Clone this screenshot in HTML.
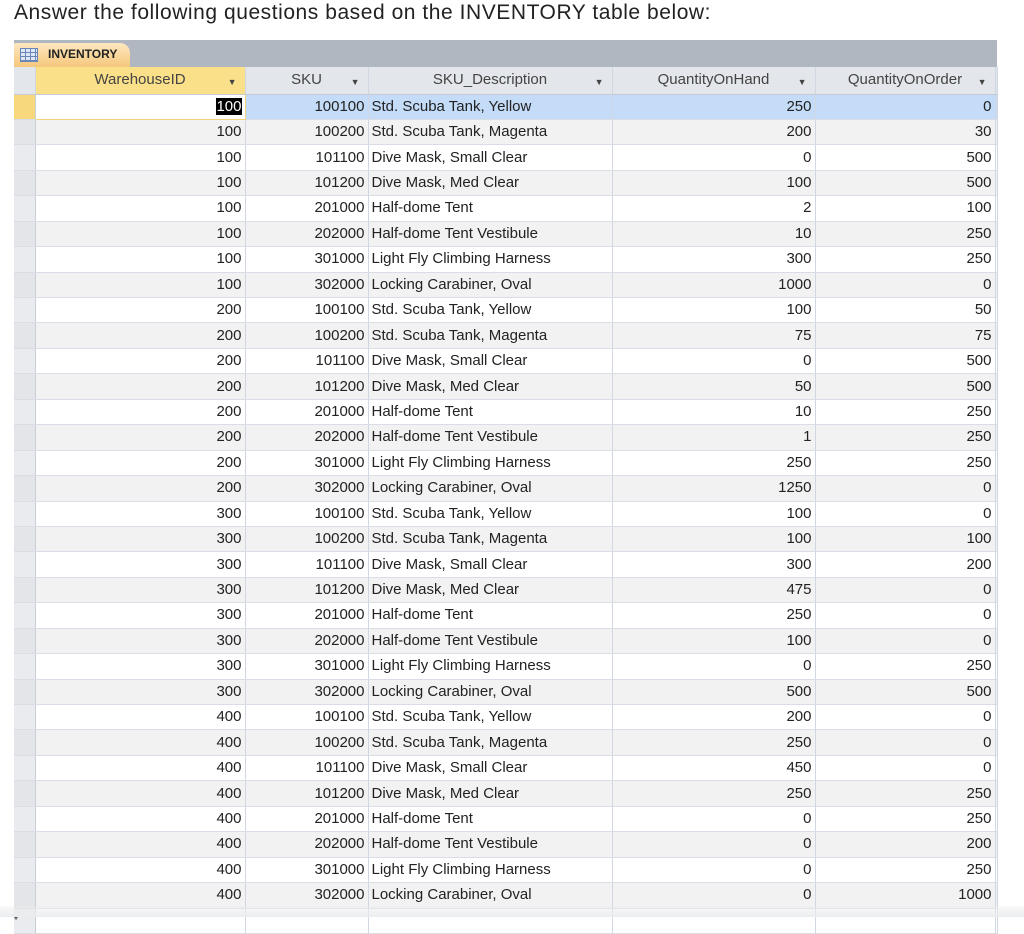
<!DOCTYPE html>
<html><head><meta charset="utf-8"><style>
body{margin:0;background:#fff;width:1024px;height:917px;overflow:hidden;position:relative;font-family:"Liberation Sans",sans-serif}
.title{position:absolute;left:14px;top:1px;font-size:21px;color:#222;letter-spacing:0.55px}
.bar{position:absolute;left:14px;top:40px;width:983px;height:27px;background:#b1b7c0}
.tab{position:absolute;left:14px;top:43px;width:116px;height:24px;background:linear-gradient(#fde8c0,#f6c77c);border-radius:2px 10px 0 0;font-size:12px;font-weight:bold;color:#222;line-height:22px}
.tab span{margin-left:34px}
.ico{position:absolute;left:6px;top:5px;width:16px;height:12px;border:1px solid #6a86b8;background:repeating-linear-gradient(90deg,transparent 0 4px,#6a86b8 4px 5px),repeating-linear-gradient(#dfe8f5 0 3px,#6a86b8 3px 4px)}
table{position:absolute;left:14px;top:67px;border-collapse:collapse;table-layout:fixed;font-size:15px;color:#222}
td,th{padding:0;height:24.45px;line-height:18px;border-right:1px solid #d0d7e2;border-bottom:1px solid #d9dee6;white-space:nowrap;overflow:hidden}
th{background:#e3e6ea;font-weight:normal;height:26.5px;color:#444;font-size:15px;position:relative;border-bottom:1px solid #c5cbd3}
th .a{position:absolute;right:8px;top:6px;font-size:9px;color:#444}
td.s{background:#e9ebee;border-right:1px solid #c8ced6}
td.r{text-align:right;padding-right:3px}
td.d{padding-left:3px}
tbody tr:nth-child(even) td{background:#f2f2f2}
tbody tr:nth-child(even) td.s{background:#e3e5e8}
tr.sel td{background:#c4dcf8}
tr.sel td.s{background:#f8d87c}
tr.sel td.w{background:#fff;border:1px solid #f2d27a}
.hl{background:#000;color:#fff}
.fade{position:absolute;left:0;top:906px;width:1024px;height:11px;background:linear-gradient(rgba(235,236,238,0.3),rgba(235,236,238,0.95))}
</style></head><body>
<div class="title">Answer the following questions based on the INVENTORY table below:</div>
<div class="bar"></div>
<div class="tab"><div class="ico"></div><span>INVENTORY</span></div>
<table>
<colgroup><col style="width:21px"><col style="width:210px"><col style="width:123px"><col style="width:244px"><col style="width:203px"><col style="width:180px"><col style="width:2px"></colgroup>
<thead><tr><th style="background:#e3e6ea"></th><th style="background:#fbe08a">WarehouseID<span class="a">▼</span></th><th>SKU<span class="a">▼</span></th><th>SKU_Description<span class="a">▼</span></th><th>QuantityOnHand<span class="a">▼</span></th><th>QuantityOnOrder<span class="a">▼</span></th><th></th></tr></thead>
<tbody>
<tr class="sel"><td class="s"></td><td class="r w"><span class="hl">100</span></td><td class="r">100100</td><td class="d">Std. Scuba Tank, Yellow</td><td class="r">250</td><td class="r">0</td><td></td></tr>
<tr><td class="s"></td><td class="r">100</td><td class="r">100200</td><td class="d">Std. Scuba Tank, Magenta</td><td class="r">200</td><td class="r">30</td><td></td></tr>
<tr><td class="s"></td><td class="r">100</td><td class="r">101100</td><td class="d">Dive Mask, Small Clear</td><td class="r">0</td><td class="r">500</td><td></td></tr>
<tr><td class="s"></td><td class="r">100</td><td class="r">101200</td><td class="d">Dive Mask, Med Clear</td><td class="r">100</td><td class="r">500</td><td></td></tr>
<tr><td class="s"></td><td class="r">100</td><td class="r">201000</td><td class="d">Half-dome Tent</td><td class="r">2</td><td class="r">100</td><td></td></tr>
<tr><td class="s"></td><td class="r">100</td><td class="r">202000</td><td class="d">Half-dome Tent Vestibule</td><td class="r">10</td><td class="r">250</td><td></td></tr>
<tr><td class="s"></td><td class="r">100</td><td class="r">301000</td><td class="d">Light Fly Climbing Harness</td><td class="r">300</td><td class="r">250</td><td></td></tr>
<tr><td class="s"></td><td class="r">100</td><td class="r">302000</td><td class="d">Locking Carabiner, Oval</td><td class="r">1000</td><td class="r">0</td><td></td></tr>
<tr><td class="s"></td><td class="r">200</td><td class="r">100100</td><td class="d">Std. Scuba Tank, Yellow</td><td class="r">100</td><td class="r">50</td><td></td></tr>
<tr><td class="s"></td><td class="r">200</td><td class="r">100200</td><td class="d">Std. Scuba Tank, Magenta</td><td class="r">75</td><td class="r">75</td><td></td></tr>
<tr><td class="s"></td><td class="r">200</td><td class="r">101100</td><td class="d">Dive Mask, Small Clear</td><td class="r">0</td><td class="r">500</td><td></td></tr>
<tr><td class="s"></td><td class="r">200</td><td class="r">101200</td><td class="d">Dive Mask, Med Clear</td><td class="r">50</td><td class="r">500</td><td></td></tr>
<tr><td class="s"></td><td class="r">200</td><td class="r">201000</td><td class="d">Half-dome Tent</td><td class="r">10</td><td class="r">250</td><td></td></tr>
<tr><td class="s"></td><td class="r">200</td><td class="r">202000</td><td class="d">Half-dome Tent Vestibule</td><td class="r">1</td><td class="r">250</td><td></td></tr>
<tr><td class="s"></td><td class="r">200</td><td class="r">301000</td><td class="d">Light Fly Climbing Harness</td><td class="r">250</td><td class="r">250</td><td></td></tr>
<tr><td class="s"></td><td class="r">200</td><td class="r">302000</td><td class="d">Locking Carabiner, Oval</td><td class="r">1250</td><td class="r">0</td><td></td></tr>
<tr><td class="s"></td><td class="r">300</td><td class="r">100100</td><td class="d">Std. Scuba Tank, Yellow</td><td class="r">100</td><td class="r">0</td><td></td></tr>
<tr><td class="s"></td><td class="r">300</td><td class="r">100200</td><td class="d">Std. Scuba Tank, Magenta</td><td class="r">100</td><td class="r">100</td><td></td></tr>
<tr><td class="s"></td><td class="r">300</td><td class="r">101100</td><td class="d">Dive Mask, Small Clear</td><td class="r">300</td><td class="r">200</td><td></td></tr>
<tr><td class="s"></td><td class="r">300</td><td class="r">101200</td><td class="d">Dive Mask, Med Clear</td><td class="r">475</td><td class="r">0</td><td></td></tr>
<tr><td class="s"></td><td class="r">300</td><td class="r">201000</td><td class="d">Half-dome Tent</td><td class="r">250</td><td class="r">0</td><td></td></tr>
<tr><td class="s"></td><td class="r">300</td><td class="r">202000</td><td class="d">Half-dome Tent Vestibule</td><td class="r">100</td><td class="r">0</td><td></td></tr>
<tr><td class="s"></td><td class="r">300</td><td class="r">301000</td><td class="d">Light Fly Climbing Harness</td><td class="r">0</td><td class="r">250</td><td></td></tr>
<tr><td class="s"></td><td class="r">300</td><td class="r">302000</td><td class="d">Locking Carabiner, Oval</td><td class="r">500</td><td class="r">500</td><td></td></tr>
<tr><td class="s"></td><td class="r">400</td><td class="r">100100</td><td class="d">Std. Scuba Tank, Yellow</td><td class="r">200</td><td class="r">0</td><td></td></tr>
<tr><td class="s"></td><td class="r">400</td><td class="r">100200</td><td class="d">Std. Scuba Tank, Magenta</td><td class="r">250</td><td class="r">0</td><td></td></tr>
<tr><td class="s"></td><td class="r">400</td><td class="r">101100</td><td class="d">Dive Mask, Small Clear</td><td class="r">450</td><td class="r">0</td><td></td></tr>
<tr><td class="s"></td><td class="r">400</td><td class="r">101200</td><td class="d">Dive Mask, Med Clear</td><td class="r">250</td><td class="r">250</td><td></td></tr>
<tr><td class="s"></td><td class="r">400</td><td class="r">201000</td><td class="d">Half-dome Tent</td><td class="r">0</td><td class="r">250</td><td></td></tr>
<tr><td class="s"></td><td class="r">400</td><td class="r">202000</td><td class="d">Half-dome Tent Vestibule</td><td class="r">0</td><td class="r">200</td><td></td></tr>
<tr><td class="s"></td><td class="r">400</td><td class="r">301000</td><td class="d">Light Fly Climbing Harness</td><td class="r">0</td><td class="r">250</td><td></td></tr>
<tr><td class="s"></td><td class="r">400</td><td class="r">302000</td><td class="d">Locking Carabiner, Oval</td><td class="r">0</td><td class="r">1000</td><td></td></tr>
<tr><td class="s" style="background:#e9ebee;font-size:10px">*</td><td style="background:#fff"></td><td style="background:#fff"></td><td style="background:#fff"></td><td style="background:#fff"></td><td style="background:#fff"></td><td></td></tr>
</tbody></table>
<div class="fade"></div>
</body></html>
